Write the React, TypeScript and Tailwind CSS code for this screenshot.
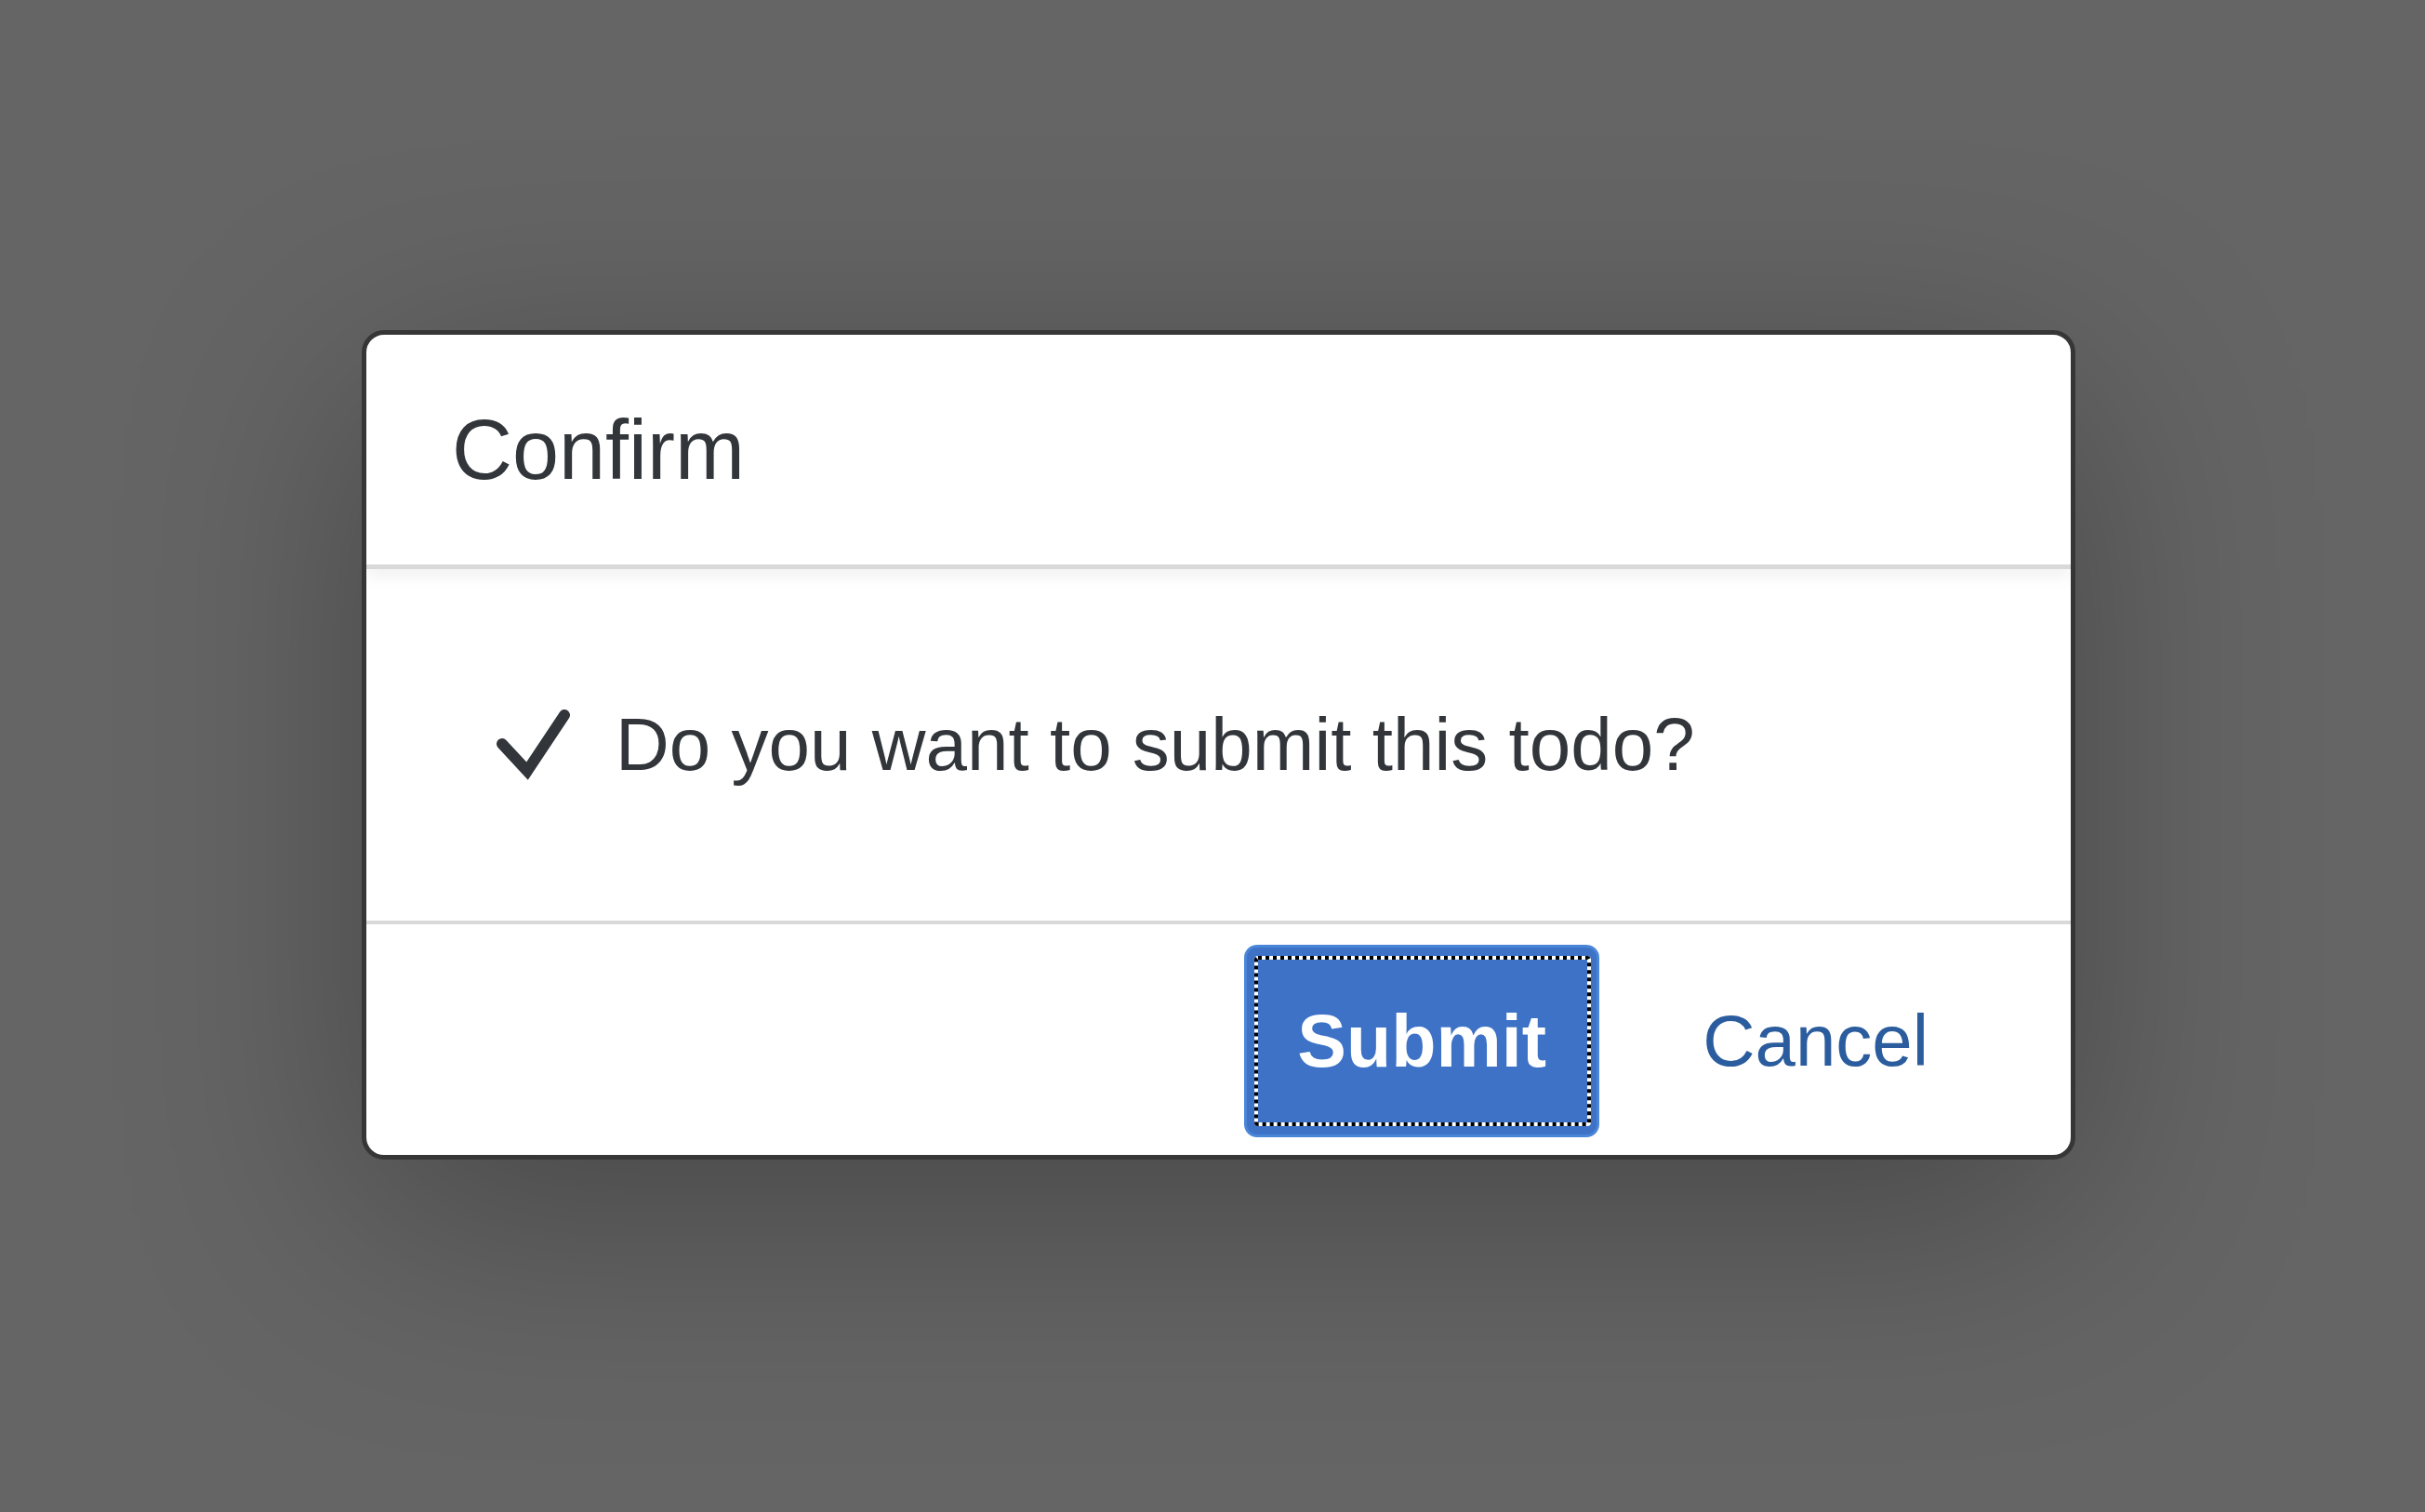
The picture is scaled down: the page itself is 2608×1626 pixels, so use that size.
export default function App() {
  return (
    <div className="min-h-screen w-full bg-[#656565] pl-[389px] pt-[355px]" style={{ height: 1626 }}>
      <div className="w-[1843px] overflow-hidden rounded-[24px] border-[5px] border-[#363636] bg-white font-['Liberation_Sans',Arial,sans-serif] text-[#32363a] shadow-[0_60px_380px_rgba(0,0,0,0.3)]">
        {/* header */}
        <div className="relative z-10 flex h-[252px] items-center border-b-[5px] border-[#d9d9d9] pl-[92px] shadow-[0_8px_18px_rgba(0,0,0,0.06)]">
          <h1 className="text-[90px] leading-none">Confirm</h1>
        </div>

        {/* content */}
        <div className="flex h-[378px] items-center pl-[137px]">
          <svg width="83" height="79" viewBox="0 0 83 79" className="shrink-0">
            <path
              d="M9 38 L36 67 L76 7"
              fill="none"
              stroke="#32363a"
              strokeWidth="12"
              strokeLinecap="round"
              strokeLinejoin="miter"
            />
          </svg>
          <p className="ml-[48px] text-[80px] leading-none">Do you want to submit this todo?</p>
        </div>

        {/* footer */}
        <div className="flex h-[252px] items-center justify-end gap-[111px] border-t-[4px] border-[#d9d9d9] pr-[153px] pt-[2px]">
          <button
            type="button"
            className="relative flex h-[207px] w-[382px] items-center justify-center rounded-[14px] border-[3px] border-[#4a86d8] bg-[#3d72c6] text-[79px] font-bold leading-none text-white"
          >
            <svg width="362" height="183" className="absolute left-[8px] top-[9px]">
              <rect x="2" y="2" width="358" height="179" rx="2" fill="none" stroke="#ffffff" strokeWidth="4" />
              <rect x="2" y="2" width="358" height="179" rx="2" fill="none" stroke="#000000" strokeWidth="4" strokeDasharray="4 4" />
            </svg>
            <span className="relative">Submit</span>
          </button>
          <button type="button" className="text-[78px] leading-none text-[#2b5d9e]">
            Cancel
          </button>
        </div>
      </div>
    </div>
  );
}
